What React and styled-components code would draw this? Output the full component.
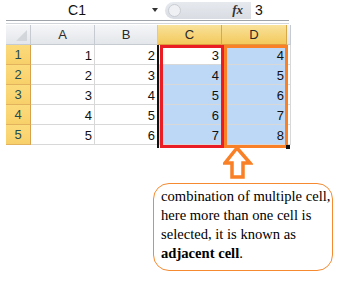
import React from 'react';
import styled, { createGlobalStyle } from 'styled-components';

const GlobalStyle = createGlobalStyle`
  html, body { margin: 0; padding: 0; background: #fff; }
  body { width: 346px; height: 284px; overflow: hidden; font-family: "Liberation Sans", Arial, sans-serif; }
`;

const Page = styled.div`
  width: 346px;
  height: 284px;
  display: flex;
  flex-direction: column;
`;

const FormulaBar = styled.div`
  height: 20px;
  width: 289px;
  display: flex;
  align-items: center;
  font-size: 14px;
  color: #111;
`;

const NameBox = styled.div`
  width: 150px;
  text-align: center;
  padding-left: 4px;
  box-sizing: border-box;
`;

const DropArrow = styled.div`
  width: 0;
  height: 0;
  margin-left: 2px;
  border-left: 3px solid transparent;
  border-right: 3px solid transparent;
  border-top: 4px solid #333;
`;

const Pill = styled.div`
  margin-left: 7px;
  width: 86px;
  height: 17px;
  background: linear-gradient(#e6e9ee, #d9dde3);
  border-radius: 9px 0 0 9px;
  display: flex;
  align-items: center;
  justify-content: space-between;
  box-sizing: border-box;
  padding: 0 8px 0 3px;
`;

const Knob = styled.div`
  width: 11px;
  height: 11px;
  border-radius: 50%;
  background: #eef0f3;
  border: 1px solid #c9cdd3;
`;

const Fx = styled.span`
  font-family: "Liberation Serif", "Times New Roman", serif;
  font-style: italic;
  font-weight: bold;
  font-size: 13px;
  color: #333;
`;

const FormulaValue = styled.div`
  padding-left: 4px;
`;

const DoubleRule = styled.div`
  margin: 0 0 1px 6px;
  width: 283px;
  height: 2px;
  border-top: 1px solid #9fa4aa;
  border-bottom: 1px solid #d3d6da;
`;

const Sheet = styled.div`
  position: relative;
  margin-left: 6px;
  display: grid;
  grid-template-columns: 25px 64px 63px 64px 65px 4px;
  grid-auto-rows: 20px;
  font-size: 13px;
`;

const ColHead = styled.div`
  box-sizing: border-box;
  display: flex;
  align-items: center;
  justify-content: center;
  color: #2a2a2a;
  background: ${p => p.$sel
    ? 'linear-gradient(#f9e29b, #f3c95c)'
    : 'linear-gradient(#f5f6f8, #e3e6ea)'};
  border-right: 1px solid ${p => p.$sel ? '#d9a948' : '#c6cad1'};
  border-bottom: 1px solid ${p => p.$sel ? '#e09b3c' : '#c6cad1'};
`;

const Corner = styled(ColHead)`
  position: relative;
  &::after {
    content: "";
    position: absolute;
    right: 3px;
    bottom: 3px;
    border-left: 11px solid transparent;
    border-bottom: 11px solid #d3d6db;
  }
`;

const RowHead = styled.div`
  box-sizing: border-box;
  display: flex;
  align-items: center;
  justify-content: center;
  color: #244b4f;
  background: linear-gradient(#fcdb7c, #f8d06a);
  border-right: 1px solid #d8a24a;
  border-bottom: 1px solid #e2b35c;
`;

const Cell = styled.div`
  box-sizing: border-box;
  display: flex;
  align-items: center;
  justify-content: flex-end;
  padding-right: 2px;
  padding-top: 2px;
  color: #111;
  background: ${p => p.$sel ? '#bcd8f6' : '#fff'};
  border-right: 1px solid #d8d8d8;
  border-bottom: 1px solid #d8d8d8;
`;

const SelBox = styled.div`
  position: absolute;
  box-sizing: border-box;
  border: 3px solid ${p => p.$color};
  pointer-events: none;
`;

const EdgeLine = styled.div`
  position: absolute;
  left: 151px;
  top: 20px;
  width: 2px;
  height: 103px;
  background: #111;
`;

const Handle = styled.div`
  position: absolute;
  left: 280px;
  top: 120px;
  width: 4px;
  height: 4px;
  background: #111;
`;

const Note = styled.div`
  display: flex;
  flex-direction: column;
  align-items: flex-start;
  padding-left: 153px;
`;

const ArrowWrap = styled.div`
  margin-left: 70px;
  margin-top: 1px;
  height: 37px;
`;

const Callout = styled.div`
  width: 180px;
  height: 88px;
  box-sizing: border-box;
  border: 1px solid #f58a30;
  border-radius: 16px;
  padding: 3px 0 0 7px;
  font-family: "Liberation Serif", "Times New Roman", serif;
  font-size: 14.6px;
  line-height: 19px;
  color: #000;
`;

const cols = ['A', 'B', 'C', 'D'];
const rows = [1, 2, 3, 4, 5];

function App() {
  return (
    <>
      <GlobalStyle />
      <Page>
        <FormulaBar>
          <NameBox>C1</NameBox>
          <DropArrow />
          <Pill>
            <Knob />
            <Fx>fx</Fx>
          </Pill>
          <FormulaValue>3</FormulaValue>
        </FormulaBar>
        <DoubleRule />
        <Sheet>
          <Corner />
          {cols.map(c => (
            <ColHead key={c} $sel={c === 'C' || c === 'D'}>{c}</ColHead>
          ))}
          <ColHead />
          {rows.map(r => (
            <React.Fragment key={r}>
              <RowHead>{r}</RowHead>
              <Cell>{r}</Cell>
              <Cell>{r + 1}</Cell>
              <Cell $sel={r !== 1}>{r + 2}</Cell>
              <Cell $sel>{r + 3}</Cell>
              <Cell />
            </React.Fragment>
          ))}
          <EdgeLine />
          <SelBox $color="#ea1c24" style={{ left: 154, top: 20, width: 64, height: 103 }} />
          <SelBox $color="#f98026" style={{ left: 218, top: 20, width: 64, height: 103 }} />
          <Handle />
        </Sheet>
        <Note>
          <ArrowWrap>
            <svg width="30" height="34" viewBox="0 0 30 34">
              <polygon
                points="14,2 27,17 20,17 20,31 9,31 9,17 2,17"
                fill="#fff"
                stroke="#f98026"
                strokeWidth="3.5"
                strokeLinejoin="miter"
              />
            </svg>
          </ArrowWrap>
          <Callout>
            combination of multiple cell, here more than one cell is selected, it is known as <b>adjacent cell</b>.
          </Callout>
        </Note>
      </Page>
    </>
  );
}

export default App;
